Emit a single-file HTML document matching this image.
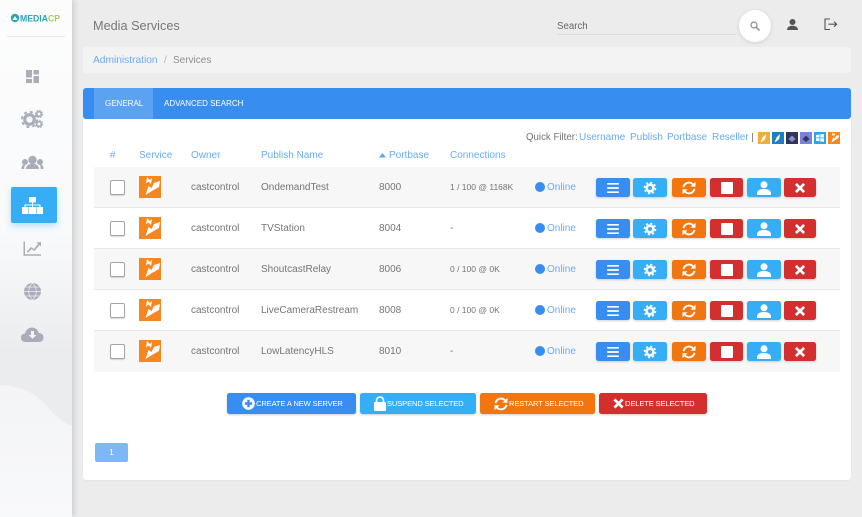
<!DOCTYPE html>
<html><head><meta charset="utf-8"><style>
*{box-sizing:border-box}
html,body{margin:0;padding:0}
body{width:862px;height:517px;overflow:hidden;background:#ececec;font-family:"Liberation Sans",sans-serif;position:relative;color:#666}
.a{position:absolute;white-space:nowrap}
.side{position:absolute;left:0;top:0;width:72px;height:517px;background:linear-gradient(#fcfcfd 0,#f9fafb 45%,#f1f2f4 58%,#ebecee 68%,#eaebed 100%);box-shadow:2px 0 6px rgba(0,0,0,.14);overflow:hidden}
.card{position:absolute;left:83px;top:88px;width:768px;height:392px;background:#fff;border-radius:3px;box-shadow:0 1px 2px rgba(0,0,0,.04)}
.t{font-size:10px;color:#757575;line-height:12px}
.h{font-size:10px;color:#6aabf4;line-height:12px}
.row{position:absolute;left:94px;width:746px;height:41px;border-bottom:1px solid #e8e8e8}
.cb{position:absolute;left:110px;width:15px;height:15px;border:1px solid #a5a5a5;border-radius:2px;background:#fff;box-shadow:0 1px 1px rgba(0,0,0,.15)}
.b{position:absolute;height:19px;border-radius:2.5px;box-shadow:0 1px 2px rgba(0,0,0,.18);display:block}
.b svg{position:absolute;left:50%;top:50%;transform:translate(-50%,-50%)}
.big{position:absolute;top:393px;height:21px;border-radius:2.5px;box-shadow:0 1px 2px rgba(0,0,0,.2);color:#fff;font-size:7.6px;letter-spacing:-.15px;line-height:22px;white-space:nowrap}
.big svg{position:absolute}
.big span{position:absolute;top:0}
</style></head><body>
<div class="side">
<svg width="72" height="517" style="position:absolute;left:0;top:0">
<defs><linearGradient id="hill" x1="0" y1="0" x2="0" y2="1"><stop offset="0" stop-color="#f3f4f6"/><stop offset="1" stop-color="#f8f9fa"/></linearGradient></defs>
<path d="M0 385C20 385 40 395 52 412C60 420 66 424 72 426V517H0Z" fill="url(#hill)"/>
<rect x="7" y="36" width="58" height="1" fill="#e5e6e8"/>
<circle cx="15" cy="18" r="4.200" fill="#2aa6b8"/>
<path d="M12.500 20l2.500-4 2.500 4z" fill="#fff"/>
<text x="20" y="21.500" font-family="Liberation Sans" font-size="9.500" font-weight="700" fill="#2aa6b8" textLength="28" lengthAdjust="spacingAndGlyphs">MEDIA</text>
<text x="48" y="21.500" font-family="Liberation Sans" font-size="9.500" font-weight="700" fill="#a5cf4c" textLength="12" lengthAdjust="spacingAndGlyphs">CP</text>
<g fill="#a9adb9">
<path d="M26 70h6v7.500h-6zM33.500 70H39v4.500h-5.500zM33.500 76H39v7h-5.500zM26 79h6v4h-6z"/>
<circle cx="29.500" cy="119.500" r="4.800" fill="none" stroke="#a9adb9" stroke-width="3.200"/>
<circle cx="29.500" cy="119.500" r="7.600" fill="none" stroke="#a9adb9" stroke-width="2" stroke-dasharray="3 3"/>
<circle cx="39" cy="114" r="2.400" fill="none" stroke="#a9adb9" stroke-width="1.800"/>
<circle cx="39" cy="114" r="3.800" fill="none" stroke="#a9adb9" stroke-width="1" stroke-dasharray="1.500 1.500"/>
<circle cx="39" cy="124" r="2.400" fill="none" stroke="#a9adb9" stroke-width="1.800"/>
<circle cx="39" cy="124" r="3.800" fill="none" stroke="#a9adb9" stroke-width="1" stroke-dasharray="1.500 1.500"/>
<circle cx="32.500" cy="160" r="4.200"/><circle cx="25" cy="162" r="3"/><circle cx="40" cy="162" r="3"/>
<path d="M26 169c0-3.500 3-5.200 6.500-5.200s6.500 1.700 6.500 5.200zM21.500 169c0-2.800 1-4.500 3.800-4.500-.7 1-1 2.800-1 4.500zM43.500 169c0-2.800-1-4.500-3.800-4.500.7 1 1 2.800 1 4.500z"/>
<path d="M23.500 241.500h1.500v12.700h16v1.500H23.500z"/>
<path d="M26.500 252l4.500-5 3 2 4-5-1.500-1.500 4.500-.5v4.500l-1.500-1.500-5 6-3-2-3.500 3.500z"/>
<circle cx="32.500" cy="291.500" r="8.500"/>
<path d="M24 291.500h17M25 287h15M25 296h15M32.500 283c-5 5-5 12 0 17M32.500 283c5 5 5 12 0 17" fill="none" stroke="#eef0f2" stroke-width=".7"/>
<path d="M25.500 342c-3 0-4.500-2-4.500-4.500 0-2.500 1.800-4 4-4 .8-3.500 3.500-6 7-6 3.500 0 6.200 2.500 6.800 5.500 2.700 0 4.700 1.800 4.700 4.500 0 2.500-1.700 4.500-4.300 4.500z"/>
</g>
<path d="M31 331h3v4h2.500l-4 3.800-4-3.800H31z" fill="#f4f5f7"/>
</svg>
<div style="position:absolute;left:11px;top:187px;width:46px;height:36px;background:#36aef6;border-radius:2px;box-shadow:0 3px 7px rgba(54,174,246,.35)"></div>
<svg width="24" height="20" style="position:absolute;left:21px;top:196px" fill="#fff">
<rect x="8" y="1" width="7" height="5.500"/><rect x="1" y="11" width="6.500" height="7"/><rect x="8" y="11" width="7" height="7"/><rect x="15.500" y="11" width="6.500" height="7"/>
<path d="M11 6h1v2.500h7.500v2.500h-1V9.500H12V11h-1V9.500H4.500V11h-1V8.500H11z"/>
</svg>
</div>

<div class="a" style="left:93px;top:18px;font-size:12.700px;line-height:16px;color:#777">Media Services</div>
<div class="a" style="left:557px;top:20.500px;font-size:9.700px;line-height:12px;color:#666">Search</div>
<div class="a" style="left:557px;top:34px;width:179px;height:1px;background:#dcdcdc"></div>
<div class="a" style="left:739px;top:10px;width:32px;height:32px;border-radius:50%;background:#fff;box-shadow:0 1px 4px rgba(0,0,0,.12)"></div>
<svg class="a" style="left:749px;top:20px" width="12" height="12" fill="none" stroke="#8a8a8a" stroke-width="1.200"><circle cx="5" cy="5" r="3"/><path d="M7.200 7.200L10.500 10.500" stroke-width="1.500"/></svg>
<svg class="a" style="left:786px;top:18px" width="13" height="13" fill="#555"><circle cx="6.500" cy="4" r="3"/><path d="M1 12c0-3 2.500-4.300 5.500-4.300s5.500 1.300 5.500 4.300z"/></svg>
<svg class="a" style="left:824px;top:18px" width="14" height="13" fill="none" stroke="#555" stroke-width="1.100"><path d="M6 1H1v10.500h5M4.500 6.200h8M10 3.600l2.700 2.600L10 8.800"/></svg>

<div class="a" style="left:83px;top:47px;width:768px;height:26px;background:#f3f3f3;border-radius:3px"></div>
<div class="a" style="left:93px;top:55px;font-size:10.200px;line-height:12px;color:#6aabf4">Administration</div>
<div class="a" style="left:164px;top:55px;font-size:10px;line-height:12px;color:#b5b5b5">/</div>
<div class="a" style="left:173px;top:55px;font-size:10px;line-height:12px;color:#8f8f8f">Services</div>

<div class="card"></div>
<div class="a" style="left:83px;top:88px;width:768px;height:31px;background:#378ef0;border-radius:3px"></div>
<div class="a" style="left:94px;top:88px;width:59px;height:31px;background:#5ba2f3"></div>
<div class="a" style="left:105px;top:99px;font-size:8px;line-height:10px;color:#fff">GENERAL</div>
<div class="a" style="left:164px;top:99px;font-size:8px;line-height:10px;color:#fff">ADVANCED SEARCH</div>

<div class="a t" style="left:526px;top:132px;font-size:9.700px">Quick Filter:</div>
<div class="a h" style="left:579px;top:132px">Username</div>
<div class="a h" style="left:630px;top:132px">Publish</div>
<div class="a h" style="left:667px;top:132px">Portbase</div>
<div class="a h" style="left:712px;top:132px">Reseller</div>
<div class="a" style="left:752px;top:133px;width:1px;height:9px;background:#888"></div>
<svg class="a" style="left:758px;top:132px" width="82" height="12">
<rect width="12" height="12" fill="#f2ac38"/><path d="M2.500 10.500l2-5 3.500-3.500-.8 5-2.200 2z" fill="#fff"/>
<rect x="14" width="12" height="12" fill="#1f7fc4"/><path d="M16.500 10.500l2-5 3.500-3.500-.8 5-2.200 2z" fill="#fff"/>
<rect x="28" width="12" height="12" fill="#2f3560"/><path d="M30.500 7l3.500-3.500L37.500 7 34 10z" fill="#8d93b8"/>
<rect x="42" width="12" height="12" fill="#7b82dc"/><path d="M44.500 7L48 3.500 51.500 7 48 10z" fill="#33365a"/>
<rect x="56" width="12" height="12" fill="#2ba7e8"/><path d="M58 3l3.500-.5V5.500H58zM62.300 2.400L66 2v3.500h-3.700zM58 6.300h3.500v3L58 8.800zM62.300 6.300H66V10l-3.700-.5z" fill="#fff"/>
<rect x="70" width="12" height="12" fill="#f6861f"/><path d="M73.500 10.500l1.500-5 1.500 1 1.500-2.500 3-1-.5 3-4 2.500z M74 4l.5-3.500 1.500 1.500 1-1-.5 3-1.300-1.300z" fill="#fff"/>
</svg>

<div class="a h" style="left:110px;top:150px">#</div>
<div class="a h" style="left:139px;top:150px">Service</div>
<div class="a h" style="left:191px;top:150px">Owner</div>
<div class="a h" style="left:261px;top:150px">Publish Name</div>
<svg class="a" style="left:379px;top:153px" width="7" height="5"><path d="M0 4.500L3.500 0 7 4.500z" fill="#5ea4f3"/></svg>
<div class="a h" style="left:389px;top:150px">Portbase</div>
<div class="a h" style="left:450px;top:150px">Connections</div>

<div class="row" style="top:167px;background:#f7f7f7"></div>
<div class="row" style="top:208px"></div>
<div class="row" style="top:249px;background:#f7f7f7"></div>
<div class="row" style="top:290px"></div>
<div class="row" style="top:331px;background:#f7f7f7;border-bottom:0"></div>

<svg width="0" height="0" style="position:absolute"><defs>
<symbol id="wz" viewBox="0 0 22 22"><rect width="22" height="22" fill="#f6861f"/><path d="M7 7.500L8 1 11 4 13 2 12 8 9.500 5.500zM6.500 19L9.500 10 12.500 12 15 7 21 5 20 11 13 15z" fill="#fff"/></symbol>
<symbol id="menu" viewBox="0 0 14 12"><path d="M0 0h14v2H0zM0 5h14v2H0zM0 10h14v2H0z" fill="#fff"/></symbol>
<symbol id="gear" viewBox="0 0 14 14"><circle cx="7" cy="7" r="3.600" fill="none" stroke="#fff" stroke-width="2.800"/><circle cx="7" cy="7" r="5.900" fill="none" stroke="#fff" stroke-width="1.800" stroke-dasharray="2.300 2.330"/></symbol>
<symbol id="sync" viewBox="0 0 14 14"><g fill="none" stroke="#fff" stroke-width="1.900"><path d="M1.500 6.200C2 3.500 4.200 1.600 7 1.600c1.900 0 3.400.9 4.400 2.200"/><path d="M12.500 7.800C12 10.500 9.800 12.400 7 12.400c-1.900 0-3.400-.9-4.400-2.200"/></g><path d="M13.500 .8v5h-5zM.5 13.200v-5h5z" fill="#fff"/></symbol>
<symbol id="user" viewBox="0 0 14 14"><circle cx="7" cy="3.800" r="3.500" fill="#fff"/><path d="M0 14v-1.500C0 9.500 3 8 7 8s7 1.500 7 4.500V14z" fill="#fff"/></symbol>
<symbol id="x" viewBox="0 0 12 12"><path d="M2.600.5L6 3.900 9.400.5l2.100 2.100L8.100 6l3.400 3.400-2.100 2.100L6 8.100l-3.400 3.400L.5 9.400 3.900 6 .5 2.600z" fill="#fff"/></symbol>
</defs></svg>

<!-- row 1 -->
<div class="cb" style="top:180px"></div><svg class="a" style="left:139px;top:176px" width="22" height="22"><use href="#wz"/></svg>
<div class="a t" style="left:191px;top:182px">castcontrol</div><div class="a t" style="left:261px;top:182px">OndemandTest</div><div class="a t" style="left:379px;top:182px">8000</div>
<div class="a t" style="left:450px;top:181px;font-size:8.500px">1 / 100 @ 1168K</div>
<div class="a" style="left:535px;top:182px;width:10px;height:10px;border-radius:50%;background:#378ef0"></div><div class="a h" style="left:547px;top:182px">Online</div>
<div class="b" style="left:596px;top:178px;width:34px;background:#378ef0"><svg width="12" height="10"><use href="#menu"/></svg></div>
<div class="b" style="left:633px;top:178px;width:34px;background:#36aef6"><svg width="13" height="13"><use href="#gear"/></svg></div>
<div class="b" style="left:672px;top:178px;width:34px;background:#f27610"><svg width="14" height="14"><use href="#sync"/></svg></div>
<div class="b" style="left:710px;top:178px;width:33px;background:#d32f2f"><svg width="12" height="12"><rect width="12" height="12" rx="1" fill="#fff"/></svg></div>
<div class="b" style="left:747px;top:178px;width:34px;background:#36aef6"><svg width="14" height="14"><use href="#user"/></svg></div>
<div class="b" style="left:784px;top:178px;width:32px;background:#d32f2f"><svg width="11" height="11"><use href="#x"/></svg></div>

<!-- row 2 -->
<div class="cb" style="top:221px"></div><svg class="a" style="left:139px;top:217px" width="22" height="22"><use href="#wz"/></svg>
<div class="a t" style="left:191px;top:223px">castcontrol</div><div class="a t" style="left:261px;top:223px">TVStation</div><div class="a t" style="left:379px;top:223px">8004</div>
<div class="a t" style="left:450px;top:223px">-</div>
<div class="a" style="left:535px;top:223px;width:10px;height:10px;border-radius:50%;background:#378ef0"></div><div class="a h" style="left:547px;top:223px">Online</div>
<div class="b" style="left:596px;top:219px;width:34px;background:#378ef0"><svg width="12" height="10"><use href="#menu"/></svg></div>
<div class="b" style="left:633px;top:219px;width:34px;background:#36aef6"><svg width="13" height="13"><use href="#gear"/></svg></div>
<div class="b" style="left:672px;top:219px;width:34px;background:#f27610"><svg width="14" height="14"><use href="#sync"/></svg></div>
<div class="b" style="left:710px;top:219px;width:33px;background:#d32f2f"><svg width="12" height="12"><rect width="12" height="12" rx="1" fill="#fff"/></svg></div>
<div class="b" style="left:747px;top:219px;width:34px;background:#36aef6"><svg width="14" height="14"><use href="#user"/></svg></div>
<div class="b" style="left:784px;top:219px;width:32px;background:#d32f2f"><svg width="11" height="11"><use href="#x"/></svg></div>

<!-- row 3 -->
<div class="cb" style="top:262px"></div><svg class="a" style="left:139px;top:258px" width="22" height="22"><use href="#wz"/></svg>
<div class="a t" style="left:191px;top:264px">castcontrol</div><div class="a t" style="left:261px;top:264px">ShoutcastRelay</div><div class="a t" style="left:379px;top:264px">8006</div>
<div class="a t" style="left:450px;top:263px;font-size:8.500px">0 / 100 @ 0K</div>
<div class="a" style="left:535px;top:264px;width:10px;height:10px;border-radius:50%;background:#378ef0"></div><div class="a h" style="left:547px;top:264px">Online</div>
<div class="b" style="left:596px;top:260px;width:34px;background:#378ef0"><svg width="12" height="10"><use href="#menu"/></svg></div>
<div class="b" style="left:633px;top:260px;width:34px;background:#36aef6"><svg width="13" height="13"><use href="#gear"/></svg></div>
<div class="b" style="left:672px;top:260px;width:34px;background:#f27610"><svg width="14" height="14"><use href="#sync"/></svg></div>
<div class="b" style="left:710px;top:260px;width:33px;background:#d32f2f"><svg width="12" height="12"><rect width="12" height="12" rx="1" fill="#fff"/></svg></div>
<div class="b" style="left:747px;top:260px;width:34px;background:#36aef6"><svg width="14" height="14"><use href="#user"/></svg></div>
<div class="b" style="left:784px;top:260px;width:32px;background:#d32f2f"><svg width="11" height="11"><use href="#x"/></svg></div>

<!-- row 4 -->
<div class="cb" style="top:303px"></div><svg class="a" style="left:139px;top:299px" width="22" height="22"><use href="#wz"/></svg>
<div class="a t" style="left:191px;top:305px">castcontrol</div><div class="a t" style="left:261px;top:305px">LiveCameraRestream</div><div class="a t" style="left:379px;top:305px">8008</div>
<div class="a t" style="left:450px;top:304px;font-size:8.500px">0 / 100 @ 0K</div>
<div class="a" style="left:535px;top:305px;width:10px;height:10px;border-radius:50%;background:#378ef0"></div><div class="a h" style="left:547px;top:305px">Online</div>
<div class="b" style="left:596px;top:301px;width:34px;background:#378ef0"><svg width="12" height="10"><use href="#menu"/></svg></div>
<div class="b" style="left:633px;top:301px;width:34px;background:#36aef6"><svg width="13" height="13"><use href="#gear"/></svg></div>
<div class="b" style="left:672px;top:301px;width:34px;background:#f27610"><svg width="14" height="14"><use href="#sync"/></svg></div>
<div class="b" style="left:710px;top:301px;width:33px;background:#d32f2f"><svg width="12" height="12"><rect width="12" height="12" rx="1" fill="#fff"/></svg></div>
<div class="b" style="left:747px;top:301px;width:34px;background:#36aef6"><svg width="14" height="14"><use href="#user"/></svg></div>
<div class="b" style="left:784px;top:301px;width:32px;background:#d32f2f"><svg width="11" height="11"><use href="#x"/></svg></div>

<!-- row 5 -->
<div class="cb" style="top:344px"></div><svg class="a" style="left:139px;top:340px" width="22" height="22"><use href="#wz"/></svg>
<div class="a t" style="left:191px;top:346px">castcontrol</div><div class="a t" style="left:261px;top:346px">LowLatencyHLS</div><div class="a t" style="left:379px;top:346px">8010</div>
<div class="a t" style="left:450px;top:346px">-</div>
<div class="a" style="left:535px;top:346px;width:10px;height:10px;border-radius:50%;background:#378ef0"></div><div class="a h" style="left:547px;top:346px">Online</div>
<div class="b" style="left:596px;top:342px;width:34px;background:#378ef0"><svg width="12" height="10"><use href="#menu"/></svg></div>
<div class="b" style="left:633px;top:342px;width:34px;background:#36aef6"><svg width="13" height="13"><use href="#gear"/></svg></div>
<div class="b" style="left:672px;top:342px;width:34px;background:#f27610"><svg width="14" height="14"><use href="#sync"/></svg></div>
<div class="b" style="left:710px;top:342px;width:33px;background:#d32f2f"><svg width="12" height="12"><rect width="12" height="12" rx="1" fill="#fff"/></svg></div>
<div class="b" style="left:747px;top:342px;width:34px;background:#36aef6"><svg width="14" height="14"><use href="#user"/></svg></div>
<div class="b" style="left:784px;top:342px;width:32px;background:#d32f2f"><svg width="11" height="11"><use href="#x"/></svg></div>

<div class="big" style="left:227px;width:129px;background:#378ef0"><svg style="left:15px;top:4px" width="13" height="13"><circle cx="6.500" cy="6.500" r="6.300" fill="#fff"/><path d="M5.300 2.800h2.400v2.500h2.500v2.400H7.700v2.500H5.300V7.700H2.800V5.300h2.500z" fill="#378ef0"/></svg><span style="left:29px">CREATE A NEW SERVER</span></div>
<div class="big" style="left:360px;width:116px;background:#36aef6"><svg style="left:14px;top:3px" width="12" height="15" fill="#fff"><rect x="0" y="6" width="12" height="9" rx="1"/><path d="M2.500 7V4.500a3.500 3.500 0 0 1 7 0V7" fill="none" stroke="#fff" stroke-width="1.600"/></svg><span style="left:27px">SUSPEND SELECTED</span></div>
<div class="big" style="left:480px;width:115px;background:#f27610"><svg style="left:14px;top:4px" width="14" height="14"><use href="#sync"/></svg><span style="left:29px">RESTART SELECTED</span></div>
<div class="big" style="left:599px;width:108px;background:#d32f2f"><svg style="left:14px;top:5px" width="11" height="11"><use href="#x"/></svg><span style="left:26px">DELETE SELECTED</span></div>

<div class="a" style="left:95px;top:443px;width:33px;height:19px;background:#7fb6f5;border-radius:2px;color:#fff;font-size:8.500px;line-height:19px;text-align:center">1</div>
</body></html>
